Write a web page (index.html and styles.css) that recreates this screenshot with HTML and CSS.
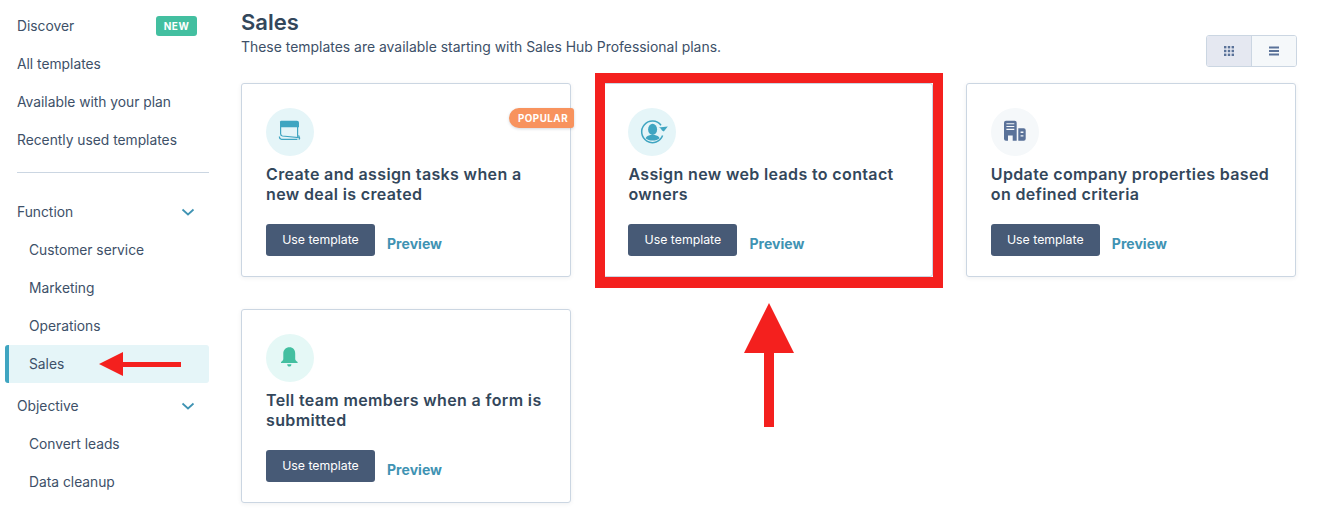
FILE: index.html
```html
<!DOCTYPE html>
<html lang="en">

<head>
    <meta charset="UTF-8">
    <meta name="viewport" content="width=device-width, initial-scale=1.0">
    <title>Workflow templates</title>
    <link rel="stylesheet" href="styles.css">
</head>

<body>
    <div class="page">
        <nav class="sidebar">
            <a class="nav-item">Discover <span class="new-badge">NEW</span></a>
            <a class="nav-item">All templates</a>
            <a class="nav-item">Available with your plan</a>
            <a class="nav-item">Recently used templates</a>
            <div class="divider"></div>
            <a class="nav-item">Function
                <svg class="chevron" viewBox="0 0 14 8"><path d="M1.5 1.5 7 6.5l5.5-5" /></svg>
            </a>
            <a class="nav-item sub">Customer service</a>
            <a class="nav-item sub">Marketing</a>
            <a class="nav-item sub">Operations</a>
            <a class="nav-item sub selected">Sales</a>
            <a class="nav-item group-next">Objective
                <svg class="chevron" viewBox="0 0 14 8"><path d="M1.5 1.5 7 6.5l5.5-5" /></svg>
            </a>
            <a class="nav-item sub">Convert leads</a>
            <a class="nav-item sub">Data cleanup</a>
        </nav>

        <main class="content">
            <div class="content-head">
                <div>
                    <h1 class="title">Sales</h1>
                    <p class="subtitle">These templates are available starting with Sales Hub Professional plans.</p>
                </div>
                <div class="view-toggle">
                    <div class="toggle-btn active">
                        <svg width="12" height="12" viewBox="0 0 12 12" fill="#5a7299">
                            <rect x="1" y="1" width="2.4" height="2.4" />
                            <rect x="4.8" y="1" width="2.4" height="2.4" />
                            <rect x="8.6" y="1" width="2.4" height="2.4" />
                            <rect x="1" y="4.8" width="2.4" height="2.4" />
                            <rect x="4.8" y="4.8" width="2.4" height="2.4" />
                            <rect x="8.6" y="4.8" width="2.4" height="2.4" />
                            <rect x="1" y="8.6" width="2.4" height="2.4" />
                            <rect x="4.8" y="8.6" width="2.4" height="2.4" />
                            <rect x="8.6" y="8.6" width="2.4" height="2.4" />
                        </svg>
                    </div>
                    <div class="toggle-btn">
                        <svg width="10" height="10" viewBox="0 0 10 10" fill="#5a7299">
                            <rect y="0.5" width="10" height="2" />
                            <rect y="4" width="10" height="2" />
                            <rect y="7.5" width="10" height="2" />
                        </svg>
                    </div>
                </div>
            </div>

            <div class="card-grid">
                <div class="card">
                    <span class="popular-badge">POPULAR</span>
                    <div class="card-icon teal">
                        <svg width="48" height="48" viewBox="0 0 48 48">
                            <path d="M15 12.7h16a2 2 0 0 1 2 2v4.6H14v-4.6a1.5 1.5 0 0 1 1-2z" fill="#3fa5c1" />
                            <path d="M14.6 19v6.8c0 1.4.6 2 1.8 2.2l15.8 1.6c-.5-.8-.6-1.6-.6-2.6V19" fill="none" stroke="#3fa5c1" stroke-width="1.2" />
                            <path d="M13.4 28.6c0 1.7.8 2.7 2.2 2.7h15.8M32.6 27.4l1 2.6c.2.6-.3 1.2-1 1.2" fill="none" stroke="#3fa5c1" stroke-width="1.2" />
                        </svg>
                    </div>
                    <h2 class="card-title">Create and assign tasks when a new deal is created</h2>
                    <div class="card-actions">
                        <button class="use-btn">Use template</button>
                        <a class="preview">Preview</a>
                    </div>
                </div>

                <div class="card">
                    <div class="card-icon teal">
                        <svg width="48" height="48" viewBox="0 0 48 48">
                            <path d="M33 17.2A10.8 10.8 0 1 0 34.6 27.6" fill="none" stroke="#3fa5c1" stroke-width="1.5" />
                            <path d="M30.6 19.6 39.8 18.4 35.8 23.4c-1.2-.3-1.8-.9-2.4-1.9-.8-1.2-1.6-1.7-2.8-1.9z" fill="#3fa5c1" />
                            <ellipse cx="24.6" cy="21.4" rx="4.5" ry="5.6" fill="#3fa5c1" />
                            <path d="M17.6 30.2c.6-1.8 2.8-2.8 4.8-3.2h4.4c2 .4 4.2 1.4 4.8 3.2-1.7 1.6-4 2.4-7 2.4s-5.3-.8-7-2.4z" fill="#3fa5c1" />
                        </svg>
                    </div>
                    <h2 class="card-title">Assign new web leads to contact owners</h2>
                    <div class="card-actions">
                        <button class="use-btn">Use template</button>
                        <a class="preview">Preview</a>
                    </div>
                </div>

                <div class="card">
                    <div class="card-icon grey">
                        <svg width="48" height="48" viewBox="0 0 48 48">
                            <path fill-rule="evenodd" fill="#5a7299" d="M15 12.7h8.7a2 2 0 0 1 2 2v18h-4v-5.2h-4.7v5.2H15a2 2 0 0 1-2-2v-16a2 2 0 0 1 2-2zM15.4 15.2v1.1h7.9v-1.1zM15.4 18v1.1h7.9V18zM15.4 20.8v1.1h7.9v-1.1z" />
                            <path fill-rule="evenodd" fill="#5a7299" d="M27.3 20.3h5.4a2 2 0 0 1 2 2v8.4a2 2 0 0 1-2 2h-5.4zM29.6 23.6v1.3h2.8v-1.3zM29.6 27.2v1.3h2.8v-1.3z" />
                        </svg>
                    </div>
                    <h2 class="card-title">Update company properties based on defined criteria</h2>
                    <div class="card-actions">
                        <button class="use-btn">Use template</button>
                        <a class="preview">Preview</a>
                    </div>
                </div>

                <div class="card">
                    <div class="card-icon mint">
                        <svg width="48" height="48" viewBox="0 0 48 48">
                            <path d="M23.5 13.2c3.6 0 5.7 2.7 5.7 6.2v5.4c0 1.5.9 2.3 2.4 3.1V29H15v-1.1c1.5-.8 2.3-1.6 2.3-3.1v-5.4c0-3.5 2.6-6.2 6.2-6.2z" fill="#43bfa0" />
                            <path d="M21.2 30.2h4.2c0 1.3-.9 2.4-2.1 2.4s-2.1-1.1-2.1-2.4z" fill="#43bfa0" />
                        </svg>
                    </div>
                    <h2 class="card-title">Tell team members when a form is submitted</h2>
                    <div class="card-actions">
                        <button class="use-btn">Use template</button>
                        <a class="preview">Preview</a>
                    </div>
                </div>
            </div>
        </main>

        <!-- annotations drawn on top of the screenshot -->
        <div class="callout-box"></div>
        <svg class="arrow arrow-left" width="84" height="26" viewBox="0 0 84 26">
            <path d="M0 13 24 1v10h58v5H24v9z" />
        </svg>
        <svg class="arrow arrow-up" width="50" height="124" viewBox="0 0 50 124">
            <path d="M25 0 50 50H30v74H20V50H0z" />
        </svg>
    </div>
</body>

</html>
```

FILE: styles.css
```css
* {
    padding: 0;
    margin: 0;
    box-sizing: border-box;
}

body {
    background: white;
    color: #33475b;
    font-family: "Inter", "Liberation Sans", sans-serif;
    font-size: 14px;
}

.page {
    position: relative;
    display: flex;
    width: 1340px;
    height: 513px;
    overflow: hidden;
}

/* sidebar */
.sidebar {
    flex: none;
    width: 204px;
    margin-left: 5px;
    padding-top: 7px;
    display: flex;
    flex-direction: column;
}

.nav-item {
    display: flex;
    align-items: center;
    justify-content: space-between;
    height: 38px;
    padding: 0 12px;
    font-size: 13.8px;
    color: #3d5068;
}

.nav-item.sub {
    padding-left: 24px;
}

.nav-item.selected {
    background: #e5f5f8;
    border-left: 4px solid #3fa5c1;
    border-radius: 3px;
    padding-left: 20px;
}

.nav-item.group-next {
    margin-top: 4px;
}

.new-badge {
    display: flex;
    align-items: center;
    justify-content: center;
    width: 41px;
    height: 20px;
    background: #43bfa0;
    border-radius: 3px;
    color: white;
    font-size: 10px;
    font-weight: 700;
    letter-spacing: .5px;
}

.divider {
    height: 1px;
    margin: 13px 0 20px 12px;
    background: #cbd6e2;
}

.chevron {
    width: 14px;
    height: 8px;
    margin-right: 2px;
    fill: none;
    stroke: #3f93b3;
    stroke-width: 1.7;
}

/* main content */
.content {
    flex: none;
    width: 1056px;
    margin-left: 32px;
}

.content-head {
    display: flex;
    justify-content: space-between;
    align-items: flex-end;
    height: 67px;
}

.content-head > div:first-child {
    align-self: flex-start;
    padding-top: 8px;
}

.title {
    font-size: 22px;
    line-height: 28px;
    font-weight: 600;
}

.subtitle {
    margin-top: 1px;
    font-size: 13.95px;
    line-height: 20px;
    color: #3d5068;
}

.view-toggle {
    display: flex;
    width: 91px;
    height: 32px;
    border: 1px solid #cbd6e2;
    border-radius: 3px;
    overflow: hidden;
}

.toggle-btn {
    flex: 1;
    display: flex;
    align-items: center;
    justify-content: center;
    background: #f5f8fa;
}

.toggle-btn.active {
    background: #e5e8f1;
    border-right: 1px solid #cbd6e2;
}

.card-grid {
    display: grid;
    grid-template-columns: repeat(3, 330px);
    column-gap: 32.4px;
    row-gap: 32px;
    margin-top: 16px;
}

.card {
    position: relative;
    height: 194px;
    padding: 24px;
    background: white;
    border: 1px solid #cbd6e2;
    border-radius: 3px;
    box-shadow: 0 1px 4px rgba(45, 62, 80, .08);
}

.card-icon {
    width: 48px;
    height: 48px;
    border-radius: 50%;
}

.card-icon.teal {
    background: #e5f5f8;
}

.card-icon.grey {
    background: #f5f8fa;
}

.card-icon.mint {
    background: #e5f8f6;
}

.card-title {
    margin-top: 8px;
    font-size: 16px;
    line-height: 20px;
    font-weight: 600;
    letter-spacing: .36px;
}

.card-actions {
    display: flex;
    align-items: flex-start;
    gap: 12px;
    margin-top: 20px;
}

.use-btn {
    width: 109px;
    height: 32px;
    padding-bottom: 2px;
    background: #475a76;
    border: none;
    border-radius: 3px;
    color: white;
    font: inherit;
    font-size: 12.3px;
}

.preview {
    margin-top: 11px;
    font-size: 14px;
    line-height: 18px;
    font-weight: 700;
    letter-spacing: .04px;
    color: #3f93b3;
}

.popular-badge {
    position: absolute;
    top: 24px;
    right: -4px;
    display: flex;
    align-items: center;
    justify-content: center;
    width: 65px;
    height: 20px;
    padding-left: 3px;
    background: #f8935e;
    border-radius: 10px 3px 3px 10px;
    box-shadow: 0 1px 3px rgba(45, 62, 80, .2);
    color: white;
    font-size: 9.8px;
    font-weight: 700;
    letter-spacing: .5px;
}

/* annotations */
.callout-box {
    position: absolute;
    left: 595px;
    top: 73px;
    width: 348px;
    height: 215px;
    border: 10px solid #f4201e;
    border-bottom-width: 11px;
}

.arrow {
    position: absolute;
    fill: #f4201e;
}

.arrow-left {
    left: 99px;
    top: 351px;
}

.arrow-up {
    left: 744px;
    top: 303px;
}
```
